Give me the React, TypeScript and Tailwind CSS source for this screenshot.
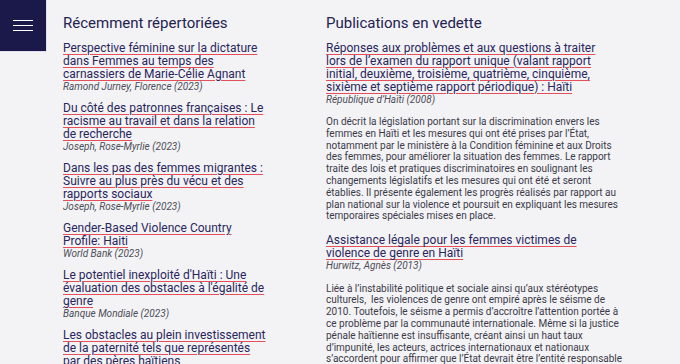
const recent = [
  {
    title: "Perspective féminine sur la dictature dans Femmes au temps des carnassiers de Marie-Célie Agnant",
    author: "Ramond Jurney, Florence (2023)",
  },
  {
    title: "Du côté des patronnes françaises : Le racisme au travail et dans la relation de recherche",
    author: "Joseph, Rose-Myrlie (2023)",
  },
  {
    title: "Dans les pas des femmes migrantes : Suivre au plus près du vécu et des rapports sociaux",
    author: "Joseph, Rose-Myrlie (2023)",
  },
  { title: "Gender-Based Violence Country Profile: Haiti", author: "World Bank (2023)" },
  {
    title: "Le potentiel inexploité d'Haïti : Une évaluation des obstacles à l'égalité de genre",
    author: "Banque Mondiale (2023)",
  },
  {
    title: "Les obstacles au plein investissement de la paternité tels que représentés par des pères haïtiens",
    author: "Joseph, Rose-Myrlie (2022)",
  },
];

// summaries keep the line breaks of the original layout
const featured = [
  {
    title:
      "Réponses aux problèmes et aux questions à traiter lors de l’examen du rapport unique (valant rapport initial, deuxième, troisième, quatrième, cinquième, sixième et septième rapport périodique) : Haïti",
    author: "République d’Haïti (2008)",
    summary: [
      "On décrit la législation portant sur la discrimination envers les",
      "femmes en Haïti et les mesures qui ont été prises par l’État,",
      "notamment par le ministère à la Condition féminine et aux Droits",
      "des femmes, pour améliorer la situation des femmes. Le rapport",
      "traite des lois et pratiques discriminatoires en soulignant les",
      "changements législatifs et les mesures qui ont été et seront",
      "établies. Il présente également les progrès réalisés par rapport au",
      "plan national sur la violence et poursuit en expliquant les mesures",
      "temporaires spéciales mises en place.",
    ],
  },
  {
    title: "Assistance légale pour les femmes victimes de violence de genre en Haïti",
    author: "Hurwitz, Agnès (2013)",
    summary: [
      "Liée à l’instabilité politique et sociale ainsi qu’aux stéréotypes",
      "culturels,\u00a0 les violences de genre ont empiré après le séisme de",
      "2010. Toutefois, le séisme a permis d’accroître l’attention portée à",
      "ce problème par la communauté internationale. Même si la justice",
      "pénale haïtienne est insuffisante, créant ainsi un haut taux",
      "d’impunité, les acteurs, actrices internationaux et nationaux",
      "s’accordent pour affirmer que l’État devrait être l’entité responsable",
      "de l’assistance légale aux victimes.",
    ],
  },
];

function TitleLink({ children }: { children: string }) {
  return (
    <a
      href="#"
      className="block text-[12px] leading-[13px] text-[#29265c] underline decoration-[#e4505a] decoration-1 underline-offset-[2px]"
    >
      {children}
    </a>
  );
}

export default function App() {
  return (
    <div className="h-[364px] overflow-hidden bg-[#f3f3f6] font-['Roboto',sans-serif] flex">
      {/* Menu button */}
      <div className="w-[47px] h-[52px] shrink-0 bg-[#1b1949] border-r border-b border-[#e0e0ea] flex flex-col items-center justify-center gap-[3.5px]">
        <span className="w-5 h-[1.5px] bg-white" />
        <span className="w-5 h-[1.5px] bg-white" />
        <span className="w-5 h-[1.5px] bg-white" />
      </div>

      <div className="flex gap-12 pl-4 pt-[13px]">
        {/* Recently listed */}
        <section className="w-[215px]">
          <h2 className="text-[15px] leading-[20px] text-[#23214f]">Récemment répertoriées</h2>
          <ul className="mt-[8.5px] flex flex-col gap-[8.5px] w-[205px]">
            {recent.map((item) => (
              <li key={item.title} className="flex flex-col">
                <TitleLink>{item.title}</TitleLink>
                <p className="text-[10px] leading-[12.5px] italic text-[#4d4d57]">{item.author}</p>
              </li>
            ))}
          </ul>
        </section>

        {/* Featured */}
        <section className="w-[292px]">
          <h2 className="text-[15px] leading-[20px] text-[#23214f]">Publications en vedette</h2>
          <div className="mt-[8.5px] flex flex-col gap-[12px]">
            {featured.map((item) => (
              <article key={item.title} className="flex flex-col">
                <div className="w-[282px]">
                  <TitleLink>{item.title}</TitleLink>
                </div>
                <p className="text-[10px] leading-[12.5px] italic text-[#4d4d57]">{item.author}</p>
                <p className="mt-[10px] text-[10px] leading-[11.8px] text-[#3b3a48]">
                  {item.summary.map((line) => (
                    <span key={line} className="block whitespace-nowrap">
                      {line}
                    </span>
                  ))}
                </p>
              </article>
            ))}
          </div>
        </section>
      </div>
    </div>
  );
}
